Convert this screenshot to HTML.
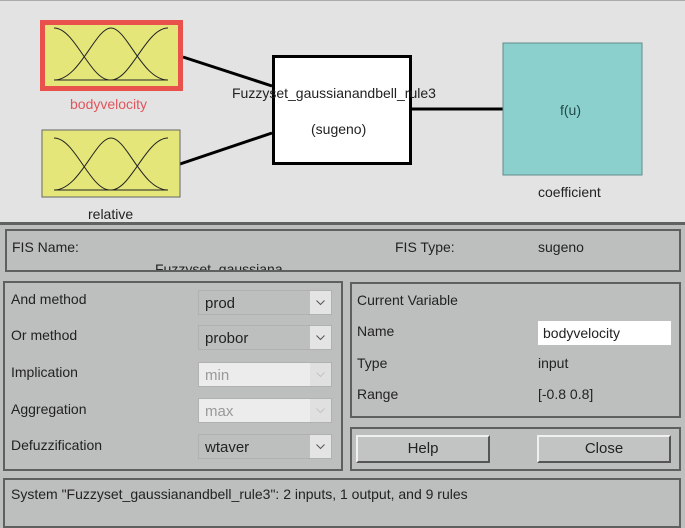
<!DOCTYPE html>
<html><head><style>
*{margin:0;padding:0;box-sizing:border-box}
body{width:685px;height:518px;overflow:hidden;background:#bdbfbf;font-family:"Liberation Sans",sans-serif;font-size:14px;color:#222;position:relative}
.a{position:absolute;white-space:nowrap}
.top{position:absolute;left:0;top:0;width:685px;height:222px;background:#e3e3e3;border-top:1px solid #aaa}
.sep{position:absolute;left:0;top:222px;width:685px;height:3px;background:#606262}
.pan{position:absolute;border:2px solid #5e6060;background:#bdbfbf}
.dd{position:absolute;left:198px;width:134px;height:25px;background:#bdbfbf;border:1px solid #b0b2b2}
.dd span{position:absolute;left:6px;top:4px;font-size:15px}
.dd i{position:absolute;right:0;top:0;width:21px;height:23px;background:#e4e4e4}
.dd i svg{position:absolute;left:6px;top:9px}
.dd.dis{background:#ececec}
.dd.dis span{color:#999}
.dd.dis i{background:#e0e0e0}
.dd.dis polyline{stroke:#c4c4c4}
.btn{position:absolute;top:435px;width:134px;height:28px;background:#c2c4c4;border:2px solid;border-color:#f0f0f0 #555 #555 #f0f0f0;text-align:center;line-height:24px;font-size:15px}
</style></head><body>
<div class="top"></div>
<svg class="a" style="left:0;top:0" width="685" height="222">
<line x1="183" y1="57" x2="272" y2="86" stroke="#000" stroke-width="3"/>
<line x1="180" y1="164" x2="272" y2="133" stroke="#000" stroke-width="3"/>
<line x1="412" y1="109" x2="503" y2="109" stroke="#000" stroke-width="3"/>
<rect x="40" y="20" width="143" height="71" fill="#e9514d"/>
<rect x="45" y="25" width="133" height="61" fill="#e4e67a"/>
<g fill="none" stroke="#222" stroke-width="1">
<path d="M54 28 C75 28 90 80 110 80 L168 80"/>
<path d="M54 80 C80 80 95 28 111 28 C127 28 142 80 168 80"/>
<path d="M54 80 L111 80 C131 80 146 28 168 28"/>
</g>
<rect x="42" y="130" width="138" height="67" fill="#e4e67a" stroke="#666" stroke-width="1"/>
<g fill="none" stroke="#222" stroke-width="1">
<path d="M54 138 C75 138 90 190 110 190 L168 190"/>
<path d="M54 190 C80 190 95 138 111 138 C127 138 142 190 168 190"/>
<path d="M54 190 L111 190 C131 190 146 138 168 138"/>
</g>
<rect x="273.5" y="56.5" width="137" height="107" fill="#fff" stroke="#000" stroke-width="3"/>
<rect x="503" y="43" width="139" height="132" fill="#8bd0cc" stroke="#5f8d8a" stroke-width="1"/>
</svg>
<div class="a" style="left:70px;top:96px;color:#e2555c;font-size:14px">bodyvelocity</div>
<div class="a" style="left:88px;top:206px;font-size:14px">relative</div>
<div class="a" style="left:232px;top:85px;font-size:14px">Fuzzyset_gaussianandbell_rule3</div>
<div class="a" style="left:311px;top:121px;font-size:14px">(sugeno)</div>
<div class="a" style="left:560px;top:102px;font-size:14px;color:#1f4a48">f(u)</div>
<div class="a" style="left:538px;top:184px;font-size:14px">coefficient</div>
<div class="sep"></div>
<div class="pan" style="left:5px;top:229px;width:676px;height:43px;overflow:hidden">
<div class="a" style="left:5px;top:8px">FIS Name:</div>
<div class="a" style="left:388px;top:8px">FIS Type:</div>
<div class="a" style="left:531px;top:8px">sugeno</div>
<div class="a" style="left:148px;top:30px">Fuzzyset_gaussiana</div>
</div>
<div class="pan" style="left:3px;top:281px;width:340px;height:190px">
<div class="a" style="left:6px;top:8px">And method</div>
<div class="a" style="left:6px;top:44px">Or method</div>
<div class="a" style="left:6px;top:81px">Implication</div>
<div class="a" style="left:6px;top:118px">Aggregation</div>
<div class="a" style="left:6px;top:154px">Defuzzification</div>
</div>
<div class="dd" style="top:290px"><span>prod</span><i><svg width="9" height="6"><polyline points="0.5,0.5 4.5,4.5 8.5,0.5" fill="none" stroke="#555"/></svg></i></div>
<div class="dd" style="top:325px"><span>probor</span><i><svg width="9" height="6"><polyline points="0.5,0.5 4.5,4.5 8.5,0.5" fill="none" stroke="#555"/></svg></i></div>
<div class="dd dis" style="top:362px"><span>min</span><i><svg width="9" height="6"><polyline points="0.5,0.5 4.5,4.5 8.5,0.5" fill="none" stroke="#555"/></svg></i></div>
<div class="dd dis" style="top:398px"><span>max</span><i><svg width="9" height="6"><polyline points="0.5,0.5 4.5,4.5 8.5,0.5" fill="none" stroke="#555"/></svg></i></div>
<div class="dd" style="top:434px"><span>wtaver</span><i><svg width="9" height="6"><polyline points="0.5,0.5 4.5,4.5 8.5,0.5" fill="none" stroke="#555"/></svg></i></div>
<div class="pan" style="left:350px;top:282px;width:331px;height:136px">
<div class="a" style="left:5px;top:8px">Current Variable</div>
<div class="a" style="left:5px;top:39px">Name</div>
<div class="a" style="left:5px;top:71px">Type</div>
<div class="a" style="left:5px;top:102px">Range</div>
<div class="a" style="left:186px;top:71px">input</div>
<div class="a" style="left:186px;top:102px">[-0.8 0.8]</div>
</div>
<div class="a" style="left:538px;top:321px;width:133px;height:24px;background:#fff;padding:4px 5px;font-size:14px">bodyvelocity</div>
<div class="pan" style="left:350px;top:427px;width:331px;height:44px"></div>
<div class="btn" style="left:356px">Help</div>
<div class="btn" style="left:537px">Close</div>
<div class="pan" style="left:3px;top:478px;width:678px;height:50px">
<div class="a" style="left:6px;top:6px">System "Fuzzyset_gaussianandbell_rule3": 2 inputs, 1 output, and 9 rules</div>
</div>
</body></html>
